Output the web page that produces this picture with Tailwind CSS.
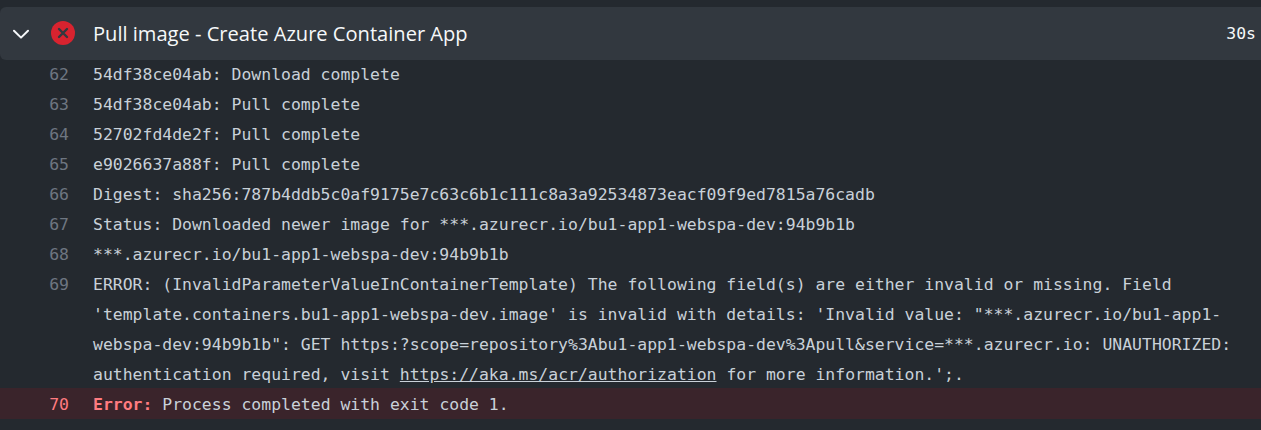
<!DOCTYPE html>
<html lang="en">
<head>
    <meta charset="UTF-8">
    <title>Pull image - Create Azure Container App</title>
    <script src="https://cdn.jsdelivr.net/npm/@tailwindcss/browser@4"></script>
</head>
<body class="bg-[#24292f] h-[430px] overflow-hidden">
    <!-- Step header -->
    <div class="pt-[7px]">
        <div class="h-[53px] bg-[#32383f] rounded-l-md flex items-center">
            <svg class="ml-[13px] w-[16px] h-[16px] text-[#f6f8fa]" viewBox="0 0 16 16" fill="none" stroke="currentColor" stroke-width="2" stroke-linecap="round" stroke-linejoin="round"><path d="M1 4.8 8 11.6 15 4.8"/></svg>
            <svg class="ml-[22px] mb-[1px] w-[24px] h-[24px]" viewBox="0 0 24 24">
                <circle cx="12" cy="12" r="12" fill="#d8232f"/>
                <path d="M8 8l8 8M16 8l-8 8" stroke="#32383f" stroke-width="2.4" stroke-linecap="round"/>
            </svg>
            <span class="ml-[18px] mt-[2px] font-['Open_Sans',sans-serif] text-[20.1px] text-[#f6f8fa] whitespace-nowrap">Pull image - Create Azure Container App</span>
            <span class="ml-auto mr-[5px] mt-[2px] font-['DejaVu_Sans_Mono',monospace] text-[16.45px] text-[#f6f8fa]">30s</span>
        </div>
    </div>

    <!-- Log lines -->
    <div class="font-['DejaVu_Sans_Mono',monospace] text-[16.45px] leading-[30px] text-[#c9d1d9]">
        <div class="flex h-[30px]"><span class="w-[69px] text-right text-[#6e7681]">62</span><span class="ml-[24px] whitespace-pre">54df38ce04ab: Download complete</span></div>
        <div class="flex h-[30px]"><span class="w-[69px] text-right text-[#6e7681]">63</span><span class="ml-[24px] whitespace-pre">54df38ce04ab: Pull complete</span></div>
        <div class="flex h-[30px]"><span class="w-[69px] text-right text-[#6e7681]">64</span><span class="ml-[24px] whitespace-pre">52702fd4de2f: Pull complete</span></div>
        <div class="flex h-[30px]"><span class="w-[69px] text-right text-[#6e7681]">65</span><span class="ml-[24px] whitespace-pre">e9026637a88f: Pull complete</span></div>
        <div class="flex h-[30px]"><span class="w-[69px] text-right text-[#6e7681]">66</span><span class="ml-[24px] whitespace-pre">Digest: sha256:787b4ddb5c0af9175e7c63c6b1c111c8a3a92534873eacf09f9ed7815a76cadb</span></div>
        <div class="flex h-[30px]"><span class="w-[69px] text-right text-[#6e7681]">67</span><span class="ml-[24px] whitespace-pre">Status: Downloaded newer image for ***.azurecr.io/bu1-app1-webspa-dev:94b9b1b</span></div>
        <div class="flex h-[30px]"><span class="w-[69px] text-right text-[#6e7681]">68</span><span class="ml-[24px] whitespace-pre">***.azurecr.io/bu1-app1-webspa-dev:94b9b1b</span></div>
        <div class="flex">
            <span class="w-[69px] text-right text-[#6e7681]">69</span>
            <div class="ml-[24px]">
                <div class="whitespace-pre">ERROR: (InvalidParameterValueInContainerTemplate) The following field(s) are either invalid or missing. Field</div>
                <div class="whitespace-pre">'template.containers.bu1-app1-webspa-dev.image' is invalid with details: 'Invalid value: "***.azurecr.io/bu1-app1-</div>
                <div class="whitespace-pre">webspa-dev:94b9b1b": GET https:?scope=repository%3Abu1-app1-webspa-dev%3Apull&amp;service=***.azurecr.io: UNAUTHORIZED:</div>
                <div class="whitespace-pre">authentication required, visit <a class="underline" href="#">https://aka.ms/acr/authorization</a> for more information.';.</div>
            </div>
        </div>
        <div class="flex h-[31px] -mt-[2px] pt-[2px] bg-[#3a242b]"><span class="w-[69px] text-right text-[#ff7b80]">70</span><span class="ml-[24px] whitespace-pre"><span class="font-bold text-[#ff7b80]">Error:</span> Process completed with exit code 1.</span></div>
    </div>
</body>
</html>
